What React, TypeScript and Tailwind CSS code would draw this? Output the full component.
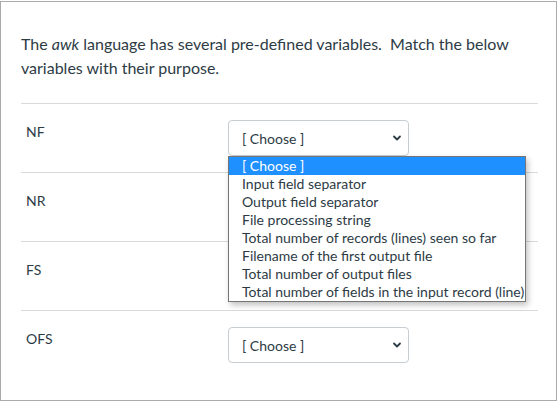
import { ReactNode } from 'react';

const options = [
  '[ Choose ]',
  'Input field separator',
  'Output field separator',
  'File processing string',
  'Total number of records (lines) seen so far',
  'Filename of the first output file',
  'Total number of output files',
  'Total number of fields in the input record (line)',
];

const rows = ['NF', 'NR', 'FS', 'OFS'];

function Chevron() {
  return (
    <svg width="10" height="10" viewBox="0 0 10 10" className="text-[#2d3b45]">
      <path d="M2 3.5 L5 6.5 L8 3.5" fill="none" stroke="currentColor" strokeWidth="1.8" strokeLinecap="round" strokeLinejoin="round" />
    </svg>
  );
}

function FakeSelect({ children }: { children?: ReactNode }) {
  return (
    <div className="relative w-[181px]">
      <div className="flex h-[36px] items-center justify-between rounded-[4px] border border-[#c7cdd1] bg-white pl-[13px] pr-[6px] text-[14px] text-[#2d3b45]">
        <span>[ Choose ]</span>
        <Chevron />
      </div>
      {children}
    </div>
  );
}

// open list under the first select
function OptionList() {
  return (
    <div className="absolute left-0 top-[36px] z-10 w-[298px] border border-[#767676] bg-white shadow-[2px_3px_6px_rgba(0,0,0,0.25)]">
      {options.map((opt, i) => (
        <div
          key={opt}
          className={
            i === 0
              ? 'h-[18px] bg-[#1e90ff] pl-[13px] text-[14px] leading-[18px] text-white'
              : 'h-[18px] pl-[13px] text-[14px] leading-[18px] text-[#2d3b45]'
          }
        >
          {opt}
        </div>
      ))}
    </div>
  );
}

export default function App() {
  return (
    <div className="h-[405px] w-[559px] bg-white pt-[1px] font-['Lato','Liberation_Sans',sans-serif]">
      <div className="h-[400px] w-[557px] border border-[#aaaaaa] bg-white pl-[20px] pr-[18px]">
        <p className="pb-[23px] pt-[30px] text-[16px] leading-[24px] text-[#2d3b45]">
          The <em>awk</em> language has several pre-defined variables.&nbsp; Match the below variables with their purpose.
        </p>
        {rows.map((name, i) => (
          <div key={name} className="flex border-t border-[#dadada] pb-[16px] pt-[16px]">
            <div className="w-[207px] pl-[5px] pt-[2px] text-[14px] leading-[20px] text-[#2d3b45]">{name}</div>
            <FakeSelect>{i === 0 && <OptionList />}</FakeSelect>
          </div>
        ))}
      </div>
    </div>
  );
}
